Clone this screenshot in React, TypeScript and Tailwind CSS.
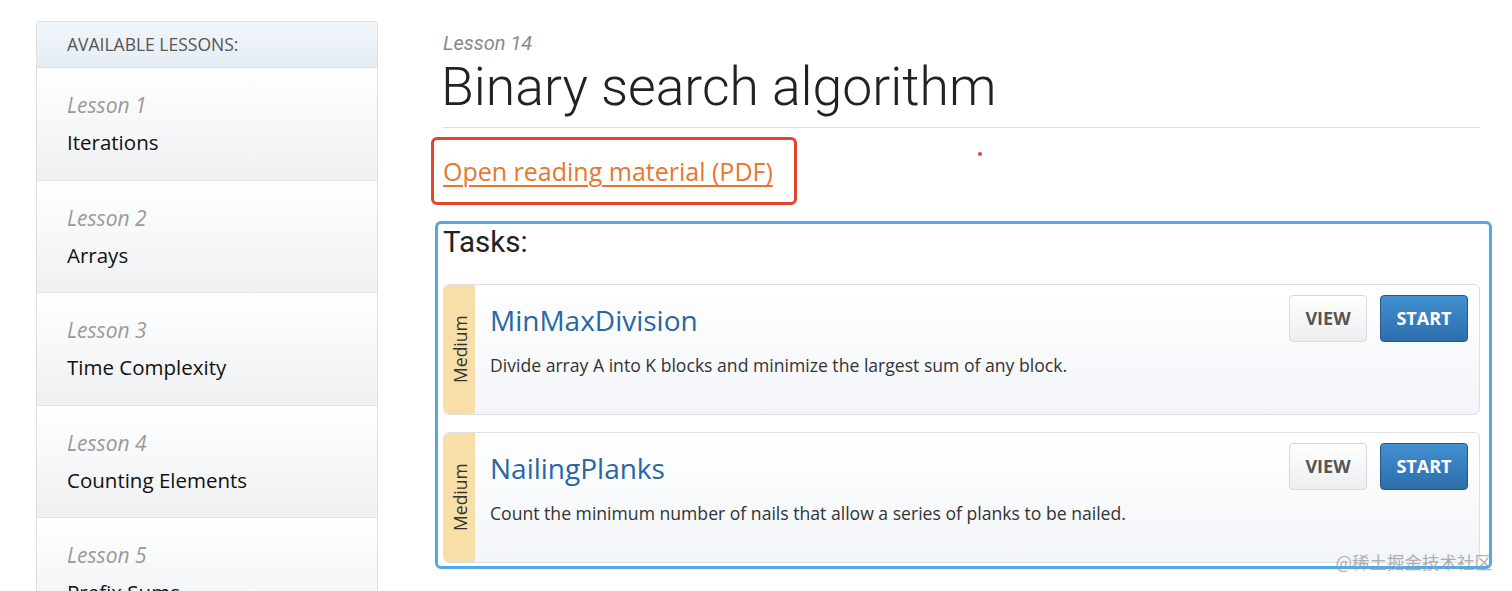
import React from "react";

const lessons = [
  { n: 1, t: "Iterations" },
  { n: 2, t: "Arrays" },
  { n: 3, t: "Time Complexity" },
  { n: 4, t: "Counting Elements" },
  { n: 5, t: "Prefix Sums" },
];

const tasks = [
  {
    name: "MinMaxDivision",
    desc: "Divide array A into K blocks and minimize the largest sum of any block.",
  },
  {
    name: "NailingPlanks",
    desc: "Count the minimum number of nails that allow a series of planks to be nailed.",
  },
];

function TaskCard({ name, desc }: { name: string; desc: string }) {
  return (
    <div className="flex h-[131px] rounded-[6px] border border-[#dcdfe3] bg-gradient-to-b from-white to-[#f2f5f9] overflow-hidden">
      <div className="w-[31px] shrink-0 bg-[#f7dfa7] flex items-center justify-center">
        <span className="-rotate-90 whitespace-nowrap text-[17.5px] text-[#333] [font-family:'Open_Sans',sans-serif]">
          Medium
        </span>
      </div>
      <div className="flex-1 flex pl-[15px] pr-[11px]">
        <div className="flex-1 pt-[16px]">
          <div className="text-[28px] leading-[38px] text-[#2767a3] [font-family:'Open_Sans',sans-serif]">
            {name}
          </div>
          <div className="mt-[13px] text-[17.6px] leading-[26px] text-[#333] [font-family:'Open_Sans',sans-serif]">
            {desc}
          </div>
        </div>
        <div className="flex gap-[13px] pt-[10px]">
          <button className="h-[47px] w-[78px] rounded-[4px] border border-[#d6d9dc] bg-gradient-to-b from-white to-[#eceef0] text-[18px] font-bold text-[#555] [font-family:'Open_Sans',sans-serif]">
            VIEW
          </button>
          <button className="h-[47px] w-[88px] rounded-[4px] border border-[#23598a] bg-gradient-to-b from-[#4290d2] to-[#2d6eaa] text-[18px] font-bold text-white [font-family:'Open_Sans',sans-serif]">
            START
          </button>
        </div>
      </div>
    </div>
  );
}

export default function App() {
  return (
    <div className="relative h-[591px] w-[1512px] overflow-hidden bg-white flex pl-[36px]">
      <aside className="mt-[21px] w-[342px] shrink-0 self-start border-x border-t border-[#dde1e5] rounded-t-[3px]">
        <div className="h-[46px] flex items-center pl-[30px] bg-gradient-to-b from-[#f2f6f9] to-[#e4edf4] border-b border-[#d4dee6] text-[17.5px] text-[#555] [font-family:'Open_Sans',sans-serif]">
          AVAILABLE LESSONS:
        </div>
        {lessons.map((l, i) => (
          <div
            key={l.n}
            className={
              (i % 2 === 1 ? "h-[112px] " : "h-[113px] ") +
              "pl-[30px] pt-[23px] border-b border-[#e1e4e7] bg-gradient-to-b from-white to-[#eef0f2] [font-family:'Open_Sans',sans-serif]"
            }
          >
            <div className="text-[21px] leading-[28px] italic text-[#9a9a9a]">Lesson {l.n}</div>
            <div className="mt-[9px] text-[20.5px] leading-[28px] text-[#111]">{l.t}</div>
          </div>
        ))}
      </aside>

      <main className="relative ml-[65px] w-[1037px] pt-[31px]">
        <div className="text-[20px] leading-[24px] italic text-[#8a8a8a] [font-family:Roboto,sans-serif]">
          Lesson 14
        </div>
        <h1 className="text-[53.5px] leading-[64px] font-light text-[#222] [font-family:Roboto,sans-serif] -ml-[2px]">
          Binary search algorithm
        </h1>
        <div className="mt-[8px] h-px bg-[#dcdfe2]" />
        <div className="mt-[9px] -ml-[12px] w-fit rounded-[6px] border-[3px] border-[#e2452b] pl-[9px] pr-[21px] py-[15px]">
          <div className="text-[25px] leading-[32px] text-[#e8772e] underline underline-offset-[4px] decoration-[1.5px] [font-family:'Open_Sans',sans-serif]">
            Open reading material (PDF)
          </div>
        </div>
        <div className="absolute left-[535px] top-[152px] h-[4px] w-[4px] rounded-full bg-[#e2452b]" />

        <div className="mt-[16px] -ml-[8px] -mr-[12px] rounded-[6px] border-[3px] border-[#52a9ea] pl-[5px] pr-[9px] pb-[3px]">
          <div className="text-[29.5px] leading-[36px] text-[#222] [font-family:Roboto,sans-serif]">Tasks:</div>
          <div className="mt-[24px] flex flex-col gap-[17px]">
            {tasks.map((t) => (
              <TaskCard key={t.name} name={t.name} desc={t.desc} />
            ))}
          </div>
        </div>
      </main>

      <div className="absolute right-[20px] top-[550px] text-[17.5px] leading-[24px] text-[#9a9a9a]/80 [font-family:'Noto_Sans_CJK_SC',sans-serif]">
        @稀土掘金技术社区
      </div>
    </div>
  );
}
